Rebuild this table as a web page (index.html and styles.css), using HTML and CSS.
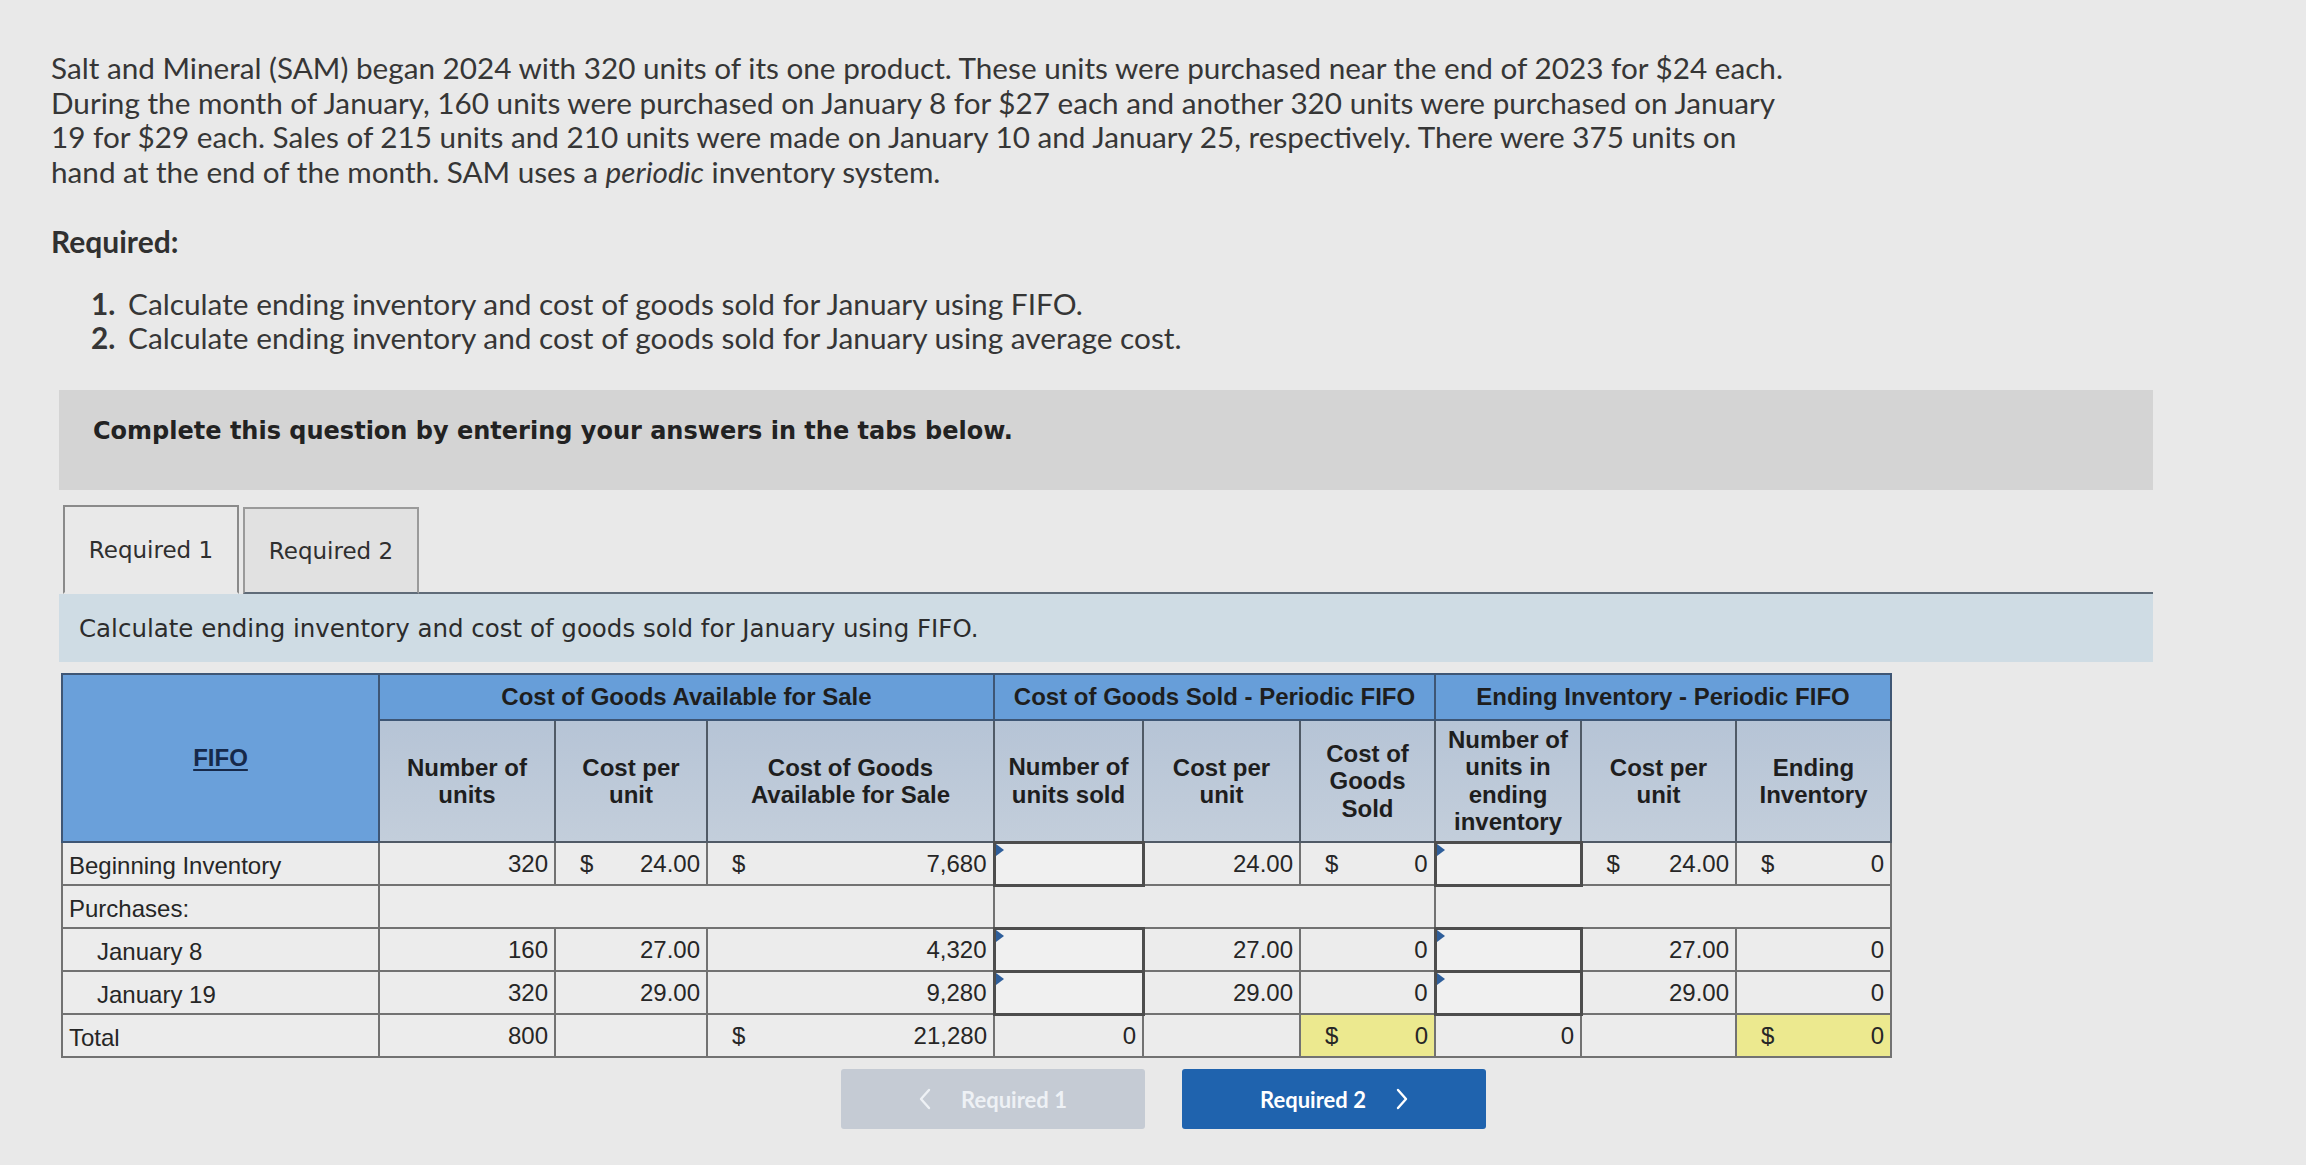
FILE: index.html
```html
<!DOCTYPE html>
<html lang="en">
<head>
<meta charset="utf-8">
<title>Salt and Mineral – FIFO</title>
<link rel="stylesheet" href="styles.css">
</head>
<body>
<main class="page">
  <p class="intro">Salt and Mineral (SAM) began 2024 with 320 units of its one product. These units were purchased near the end of 2023 for $24 each.<br>During the month of January, 160 units were purchased on January 8 for $27 each and another 320 units were purchased on January<br>19 for $29 each. Sales of 215 units and 210 units were made on January 10 and January 25, respectively. There were 375 units on<br>hand at the end of the month. SAM uses a <em>periodic</em> inventory system.</p>
  <p class="req-title">Required:</p>
  <ol class="req-list">
    <li><span class="req-num">1.</span>Calculate ending inventory and cost of goods sold for January using FIFO.</li>
    <li><span class="req-num">2.</span>Calculate ending inventory and cost of goods sold for January using average cost.</li>
  </ol>

  <section class="panel">
    <div class="notice">Complete this question by entering your answers in the tabs below.</div>
    <div class="tabs">
      <div class="tab tab-active">Required 1</div>
      <div class="tab">Required 2</div>
      <div class="tab-rest"></div>
    </div>
    <div class="instruction">Calculate ending inventory and cost of goods sold for January using FIFO.</div>

    <table class="grid">
      <colgroup>
        <col class="w-label"><col class="w-units"><col class="w-cpu"><col class="w-cogas">
        <col class="w-sold"><col class="w-cpu2"><col class="w-cogs">
        <col class="w-end"><col class="w-cpu3"><col class="w-endinv">
      </colgroup>
      <thead>
        <tr class="hrow1">
          <th rowspan="2" class="h-fifo"><span class="fifo-link">FIFO</span></th>
          <th colspan="3">Cost of Goods Available for Sale</th>
          <th colspan="3">Cost of Goods Sold - Periodic FIFO</th>
          <th colspan="3">Ending Inventory - Periodic FIFO</th>
        </tr>
        <tr class="hrow2">
          <th>Number of<br>units</th>
          <th>Cost per<br>unit</th>
          <th>Cost of Goods<br>Available for Sale</th>
          <th>Number of<br>units sold</th>
          <th>Cost per<br>unit</th>
          <th>Cost of<br>Goods<br>Sold</th>
          <th>Number of<br>units in<br>ending<br>inventory</th>
          <th>Cost per<br>unit</th>
          <th>Ending<br>Inventory</th>
        </tr>
      </thead>
      <tbody>
        <tr>
          <td class="label">Beginning Inventory</td>
          <td class="num">320</td>
          <td class="num"><span class="cur">$</span>24.00</td>
          <td class="num"><span class="cur">$</span>7,680</td>
          <td class="inp"></td>
          <td class="num">24.00</td>
          <td class="num"><span class="cur">$</span>0</td>
          <td class="inp"></td>
          <td class="num"><span class="cur">$</span>24.00</td>
          <td class="num"><span class="cur">$</span>0</td>
        </tr>
        <tr>
          <td class="label">Purchases:</td>
          <td colspan="3"></td>
          <td colspan="3"></td>
          <td colspan="3"></td>
        </tr>
        <tr>
          <td class="label indent">January 8</td>
          <td class="num">160</td>
          <td class="num">27.00</td>
          <td class="num">4,320</td>
          <td class="inp"></td>
          <td class="num">27.00</td>
          <td class="num">0</td>
          <td class="inp"></td>
          <td class="num">27.00</td>
          <td class="num">0</td>
        </tr>
        <tr>
          <td class="label indent">January 19</td>
          <td class="num">320</td>
          <td class="num">29.00</td>
          <td class="num">9,280</td>
          <td class="inp"></td>
          <td class="num">29.00</td>
          <td class="num">0</td>
          <td class="inp"></td>
          <td class="num">29.00</td>
          <td class="num">0</td>
        </tr>
        <tr>
          <td class="label">Total</td>
          <td class="num">800</td>
          <td class="num"></td>
          <td class="num"><span class="cur">$</span>21,280</td>
          <td class="num">0</td>
          <td class="num"></td>
          <td class="num total"><span class="cur">$</span>0</td>
          <td class="num">0</td>
          <td class="num"></td>
          <td class="num total"><span class="cur">$</span>0</td>
        </tr>
      </tbody>
    </table>

    <div class="nav">
      <button class="nav-btn nav-prev" type="button">
        <svg class="chev" viewBox="0 0 12 22" width="12" height="22"><polyline points="10,2 2,11 10,20" fill="none" stroke="currentColor" stroke-width="2.4" stroke-linecap="round" stroke-linejoin="round"/></svg>
        <span>Required 1</span>
      </button>
      <button class="nav-btn nav-next" type="button">
        <span>Required 2</span>
        <svg class="chev" viewBox="0 0 12 22" width="12" height="22"><polyline points="2,2 10,11 2,20" fill="none" stroke="currentColor" stroke-width="2.4" stroke-linecap="round" stroke-linejoin="round"/></svg>
      </button>
    </div>
  </section>
</main>
</body>
</html>
```

FILE: styles.css
```css
* { box-sizing: border-box; }

html, body {
  margin: 0;
  padding: 0;
  background: #e9e9e9;
}

body {
  width: 2306px;
  height: 1165px;
  overflow: hidden;
  font-family: Lato, "Open Sans", sans-serif;
  color: #333333;
}

.page {
  padding: 51px 0 0 51px;
}

.intro {
  margin: 0;
  font-size: 29.7px;
  line-height: 34.5px;
  color: #363636;
  white-space: nowrap;
}

.req-title {
  margin: 35px 0 0 0;
  font-size: 30px;
  line-height: 34px;
  font-weight: 700;
  color: #303030;
}

.req-list {
  list-style: none;
  margin: 29px 0 0 0;
  padding: 0 0 0 40px;
  font-size: 29.8px;
  line-height: 34px;
  color: #363636;
}

.req-list li {
  display: flex;
}

.req-num {
  width: 37px;
  font-weight: 700;
}

.panel {
  margin: 35px 0 0 8px;
  width: 2094px;
}

.notice {
  height: 100px;
  padding: 26px 0 0 34px;
  background: #d4d4d4;
  font-family: "DejaVu Sans", Verdana, sans-serif;
  font-weight: 700;
  font-size: 24px;
  line-height: 30px;
  color: #222222;
}

.tabs {
  display: flex;
  align-items: flex-end;
  margin-top: 15px;
  padding-left: 4px;
  height: 89px;
}

.tab {
  width: 176px;
  height: 87px;
  display: flex;
  align-items: center;
  justify-content: center;
  font-family: "DejaVu Sans", Verdana, sans-serif;
  font-size: 23px;
  color: #2f2f2f;
  background: #e1e1e1;
  border: 2px solid #9a9a9a;
  border-bottom: 2px solid #5f6b78;
  margin-right: 4px;
}

.tab-active {
  background: #e9e9e9;
  border-color: #8a8a8a;
  border-bottom-color: transparent;
  height: 89px;
}

.tab-rest {
  flex: 1;
  border-bottom: 2px solid #5f6b78;
  margin-left: -4px;
}

.instruction {
  height: 68px;
  display: flex;
  align-items: center;
  padding-left: 20px;
  background: #cfdce4;
  font-family: "DejaVu Sans", Verdana, sans-serif;
  font-size: 24.5px;
  color: #2c2c2c;
}

.grid {
  margin: 11px 0 0 2px;
  border-collapse: collapse;
  table-layout: fixed;
  width: 1829px;
  font-family: "Liberation Sans", Arial, sans-serif;
  font-size: 24px;
  color: #262626;
}

.w-label { width: 317px; }
.w-units { width: 176px; }
.w-cpu { width: 152px; }
.w-cogas { width: 287px; }
.w-sold { width: 149px; }
.w-cpu2 { width: 157px; }
.w-cogs { width: 135px; }
.w-end { width: 146px; }
.w-cpu3 { width: 155px; }
.w-endinv { width: 155px; }

.grid th {
  font-weight: 700;
  border: 2px solid #3e5675;
  color: #1e1e1e;
}

.hrow1 th {
  height: 46px;
  background: #679ed9;
  font-size: 24px;
  line-height: 28px;
  padding: 0 4px;
}

.hrow1 th.h-fifo {
  background: #6aa0da;
}

.fifo-link {
  text-decoration: underline;
  text-decoration-thickness: 2px;
  text-underline-offset: 3px;
  color: #16294a;
}

.hrow2 th {
  height: 122px;
  background: linear-gradient(#b6c4d6, #c3cedb);
  line-height: 27.5px;
  padding: 0 4px;
  border-color: #505a66;
}

.grid td {
  height: 43px;
  border: 2px solid #727272;
  background: #ececec;
  padding: 0 6px;
  line-height: 26px;
  white-space: nowrap;
}

.grid td.label {
  padding-left: 6px;
  padding-top: 4px;
}

.grid td.indent {
  padding-left: 34px;
}

.grid td.num {
  text-align: right;
}

.cur {
  float: left;
  margin-left: 18px;
}

.grid td.total {
  background: #ece98f;
}

.grid td.inp {
  position: relative;
  border: 3px solid #4d4d4d;
  background: #f0f0f0;
}

.grid td.inp::before {
  content: "";
  position: absolute;
  left: 0;
  top: 0;
  border-top: 6px solid transparent;
  border-bottom: 6px solid transparent;
  border-left: 8px solid #2e5e9a;
}

.nav {
  display: flex;
  gap: 37px;
  margin: 11px 0 0 782px;
}

.nav-btn {
  width: 304px;
  height: 60px;
  border: none;
  border-radius: 3px;
  display: flex;
  align-items: center;
  justify-content: center;
  gap: 30px;
  font-family: Lato, "Open Sans", sans-serif;
  font-weight: 700;
  font-size: 22px;
  padding: 0;
}

.nav-prev {
  background: #c5cbd4;
  color: #eef1f5;
}

.nav-next {
  background: #1f63ae;
  color: #ffffff;
}

.chev {
  display: block;
}
```
